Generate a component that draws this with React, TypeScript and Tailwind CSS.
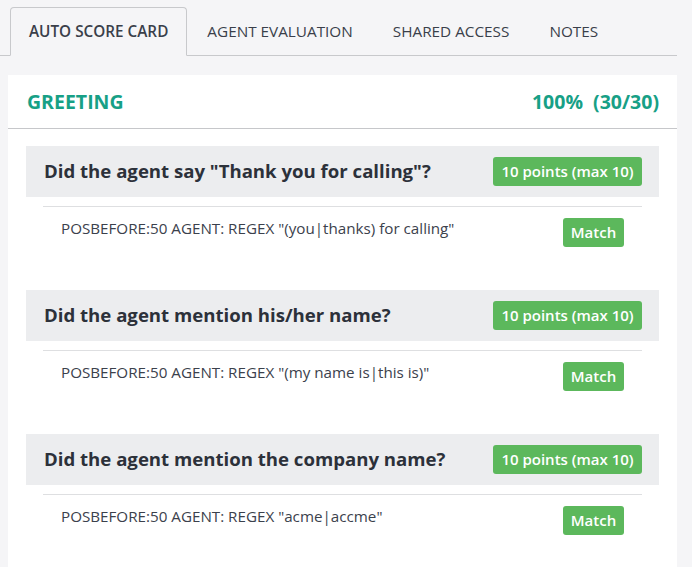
const tabs = ['AUTO SCORE CARD', 'AGENT EVALUATION', 'SHARED ACCESS', 'NOTES']

const questions = [
  {
    title: 'Did the agent say "Thank you for calling"?',
    rule: 'POSBEFORE:50 AGENT: REGEX "(you|thanks) for calling"',
  },
  {
    title: 'Did the agent mention his/her name?',
    rule: 'POSBEFORE:50 AGENT: REGEX "(my name is|this is)"',
  },
  {
    title: 'Did the agent mention the company name?',
    rule: 'POSBEFORE:50 AGENT: REGEX "acme|accme"',
  },
]

function Tabs() {
  return (
    <div className="flex w-[677px] border-b border-[#c8c9cc] pl-[10px] pt-[7px]">
      {tabs.map((tab, i) =>
        i === 0 ? (
          <div
            key={tab}
            className="-mb-px flex h-[49px] items-center rounded-t-[4px] border border-[#c8c9cc] border-b-[#f5f5f7] bg-[#f5f5f7] px-[18px] text-[15.3px] font-semibold text-[#3a3f4a]"
          >
            {tab}
          </div>
        ) : (
          <div
            key={tab}
            className="-mb-px flex h-[49px] items-center border border-transparent px-[19px] text-[15.3px] text-[#3a3f4a]"
          >
            {tab}
          </div>
        ),
      )}
    </div>
  )
}

function Question({ title, rule }: { title: string; rule: string }) {
  return (
    <div className="mb-[43px]">
      <div className="flex h-[51px] items-center justify-between bg-[#ecedef] pl-[18px] pr-[17px]">
        <h3 className="mb-[2px] text-[18.6px] font-bold text-[#2c313a]">{title}</h3>
        <span className="flex h-[29px] w-[149px] items-center justify-center rounded-[3px] bg-[#5cb85c] text-[15px] font-semibold text-white">
          10 points (max 10)
        </span>
      </div>
      <div className="mx-[17px] mt-[9px] border-t border-[#dedfe1] pt-[11px]">
        <div className="flex items-start justify-between pl-[18px] pr-[18px]">
          <span className="text-[15.2px] leading-[20px] text-[#3b414c]">{rule}</span>
          <span className="flex h-[29px] w-[61px] items-center justify-center rounded-[3px] bg-[#5cb85c] text-[15px] font-semibold text-white">
            Match
          </span>
        </div>
      </div>
    </div>
  )
}

export default function App() {
  return (
    <div
      className="flex min-h-screen flex-col overflow-hidden bg-[#f5f5f7]"
      style={{ fontFamily: '"Open Sans", "Noto Sans", sans-serif' }}
    >
      <Tabs />
      <div className="ml-[8px] mt-[19px] w-[669px] flex-1 bg-white">
        <div className="flex h-[54px] items-center justify-between border-b border-[#c6c7ca] pl-[19px] pr-[18px] text-[19.5px] font-bold text-[#17a086]">
          <span>GREETING</span>
          <span>100%&nbsp; (30/30)</span>
        </div>
        <div className="px-[18px] pt-[17px]">
          {questions.map((q) => (
            <Question key={q.title} {...q} />
          ))}
        </div>
      </div>
    </div>
  )
}
